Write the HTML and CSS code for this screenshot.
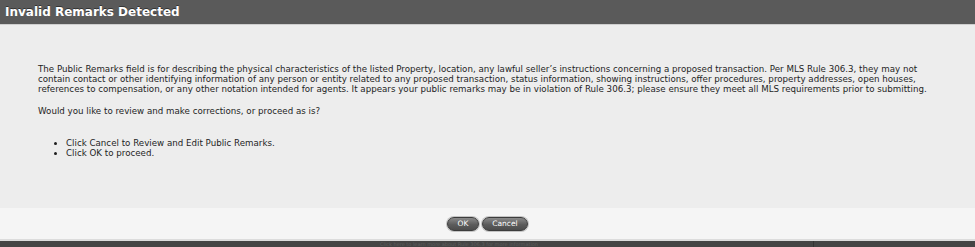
FILE: index.html
```html
<!DOCTYPE html>
<html>
<head>
<meta charset="utf-8">
<link rel="stylesheet" href="styles.css">
</head>
<body>
<div class="dialog">
  <div class="header"><h1 class="title">Invalid Remarks Detected</h1></div>
  <div class="content">
    <p class="para">The Public Remarks field is for describing the physical characteristics of the listed Property, location, any lawful seller’s instructions concerning a proposed transaction. Per MLS Rule 306.3, they may not<br>contain contact or other identifying information of any person or entity related to any proposed transaction, status information, showing instructions, offer procedures, property addresses, open houses,<br>references to compensation, or any other notation intended for agents. It appears your public remarks may be in violation of Rule 306.3; please ensure they meet all MLS requirements prior to submitting.</p>
    <p class="para">Would you like to review and make corrections, or proceed as is?</p>
    <ul class="list">
      <li>Click Cancel to Review and Edit Public Remarks.</li>
      <li>Click OK to proceed.</li>
    </ul>
  </div>
  <div class="footer">
    <button class="btn btn-ok">OK</button>
    <button class="btn btn-cancel">Cancel</button>
  </div>
  <div class="bottombar"><span class="bottomtext">Click here to learn more about Rule 306.3 for more information</span><span class="divider"></span></div>
</div>
</body>
</html>
```
FILE: styles.css
```css
html, body {
  margin: 0;
  padding: 0;
  background: #ededed;
}
.dialog {
  width: 975px;
  height: 247px;
  display: flex;
  flex-direction: column;
  overflow: hidden;
  font-family: "DejaVu Sans", Verdana, sans-serif;
}
.header {
  height: 24px;
  background: #5a5a5a;
  border-bottom: 1px solid #cfcfcf;
  display: flex;
  align-items: center;
  padding-left: 5px;
  box-sizing: content-box;
}
.title {
  margin: 0;
  font-size: 12px;
  font-weight: bold;
  color: #ffffff;
  text-shadow: 0 -1px 0 #333;
}
.content {
  height: 183px;
  background: #ededed;
  padding: 39px 0 0 38px;
  box-sizing: border-box;
  font-size: 8.7px;
  line-height: 10px;
  color: #1e1e1e;
}
.para {
  margin: 0 0 12px 0;
  white-space: nowrap;
}
.list {
  margin: 22px 0 0 0;
  padding-left: 28px;
  list-style: disc;
}
.footer {
  height: 31px;
  background: #f5f5f5;
  border-bottom: 2px solid #dcdcdc;
  display: flex;
  justify-content: center;
  align-items: center;
  gap: 3px;
  box-sizing: content-box;
}
.btn {
  height: 14px;
  padding: 0;
  border: 1px solid #3c3c3c;
  border-radius: 7px;
  background: linear-gradient(#8a8a8a, #5c5c5c 55%, #4c4c4c);
  color: #ffffff;
  font-family: "DejaVu Sans", Verdana, sans-serif;
  font-size: 7.5px;
  font-weight: normal;
  line-height: 12px;
  box-shadow: 0 0 0 1px #c4c4c4;
}
.btn-ok { width: 32px; }
.btn-cancel { width: 46px; }
.bottombar {
  flex: 1;
  background: #444444;
  position: relative;
  overflow: hidden;
}
.bottomtext {
  position: absolute;
  left: 380px;
  top: 0;
  font-size: 5px;
  line-height: 6px;
  color: #5e5e5e;
}
.divider {
  position: absolute;
  left: 813px;
  top: 0;
  width: 1px;
  height: 10px;
  background: #333;
}
```
